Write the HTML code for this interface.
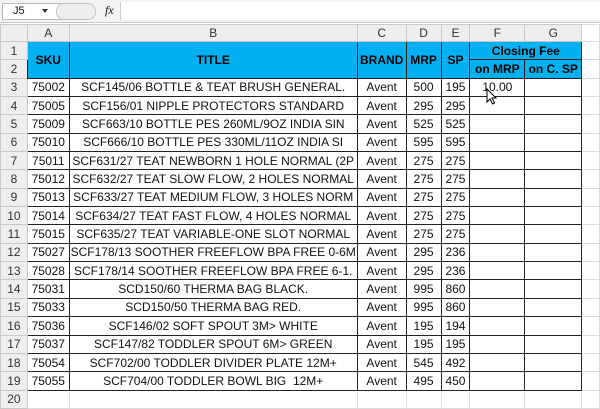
<!DOCTYPE html>
<html><head><style>
body{margin:0;width:600px;height:407px;overflow:hidden;background:#fff;font-family:"Liberation Sans",sans-serif;font-size:12px;color:#111;position:relative}
.fb{position:absolute;left:0;top:0;width:600px;height:22px;background:#f3f3f3;border-bottom:1px solid #c9c9c9}
.nb{position:absolute;left:2px;top:3px;width:50px;height:15px;background:#fff;border:1px solid #bbb;font-size:11px;padding-left:10px;line-height:15px}
.arr{position:absolute;left:42px;top:9px;border:3px solid transparent;border-top:4px solid #333}
.pill{position:absolute;left:56px;top:3px;width:38px;height:15px;border:1px solid #c4c4c4;border-radius:8px;background:#eee}
.fx{position:absolute;left:105px;top:3px;font-style:italic;font-family:"Liberation Serif",serif;font-size:12px}
.fi{position:absolute;left:120px;top:2px;width:480px;height:18px;background:#fff;border-left:1px solid #ccc}
table{position:absolute;left:0;top:24px;border-collapse:collapse;table-layout:fixed}
td{padding:0;height:17.35px;text-align:center;white-space:nowrap;overflow:hidden;border:1px solid #222;font-size:12px}
td.rh{background:#eeeeee;border:1px solid #c8c8c8;color:#333;text-align:center}
tr.ch td{background:#eeeeee;border:1px solid #c8c8c8;color:#333;height:16px}
.bl{background:#00b0f0;font-weight:bold;color:#000}
td.e{border:1px solid #dcdcdc}
</style></head><body>
<div class="fb"><div class="nb">J5</div><div class="arr"></div><div class="pill"></div><div class="fx">fx</div><div class="fi"></div></div>
<table>
<colgroup><col style="width:27px"><col style="width:42px"><col style="width:288px"><col style="width:49px"><col style="width:35px"><col style="width:29px"><col style="width:55px"><col style="width:57px"><col style="width:18px"></colgroup>
<tr class="ch"><td></td><td>A</td><td>B</td><td>C</td><td>D</td><td>E</td><td>F</td><td>G</td><td style="background:#fff;border-color:#ddd"></td></tr>
<tr><td class="rh">1</td><td class="bl" rowspan="2">SKU</td><td class="bl" rowspan="2">TITLE</td><td class="bl" rowspan="2">BRAND</td><td class="bl" rowspan="2">MRP</td><td class="bl" rowspan="2">SP</td><td class="bl" colspan="2">Closing Fee</td><td class="e"></td></tr>
<tr><td class="rh">2</td><td class="bl">on MRP</td><td class="bl">on C. SP</td><td class="e"></td></tr>
<tr><td class="rh">3</td><td>75002</td><td>SCF145/06 BOTTLE &amp; TEAT BRUSH GENERAL.</td><td>Avent</td><td>500</td><td>195</td><td>10.00</td><td></td><td class="e"></td></tr>
<tr><td class="rh">4</td><td>75005</td><td>SCF156/01 NIPPLE PROTECTORS STANDARD</td><td>Avent</td><td>295</td><td>295</td><td></td><td></td><td class="e"></td></tr>
<tr><td class="rh">5</td><td>75009</td><td>SCF663/10 BOTTLE PES 260ML/9OZ INDIA SIN</td><td>Avent</td><td>525</td><td>525</td><td></td><td></td><td class="e"></td></tr>
<tr><td class="rh">6</td><td>75010</td><td>SCF666/10 BOTTLE PES 330ML/11OZ INDIA SI</td><td>Avent</td><td>595</td><td>595</td><td></td><td></td><td class="e"></td></tr>
<tr><td class="rh">7</td><td>75011</td><td>SCF631/27 TEAT NEWBORN 1 HOLE NORMAL (2P</td><td>Avent</td><td>275</td><td>275</td><td></td><td></td><td class="e"></td></tr>
<tr><td class="rh">8</td><td>75012</td><td>SCF632/27 TEAT SLOW FLOW, 2 HOLES NORMAL</td><td>Avent</td><td>275</td><td>275</td><td></td><td></td><td class="e"></td></tr>
<tr><td class="rh">9</td><td>75013</td><td>SCF633/27 TEAT MEDIUM FLOW, 3 HOLES NORM</td><td>Avent</td><td>275</td><td>275</td><td></td><td></td><td class="e"></td></tr>
<tr><td class="rh">10</td><td>75014</td><td>SCF634/27 TEAT FAST FLOW, 4 HOLES NORMAL</td><td>Avent</td><td>275</td><td>275</td><td></td><td></td><td class="e"></td></tr>
<tr><td class="rh">11</td><td>75015</td><td>SCF635/27 TEAT VARIABLE-ONE SLOT NORMAL</td><td>Avent</td><td>275</td><td>275</td><td></td><td></td><td class="e"></td></tr>
<tr><td class="rh">12</td><td>75027</td><td>SCF178/13 SOOTHER FREEFLOW BPA FREE 0-6M</td><td>Avent</td><td>295</td><td>236</td><td></td><td></td><td class="e"></td></tr>
<tr><td class="rh">13</td><td>75028</td><td>SCF178/14 SOOTHER FREEFLOW BPA FREE 6-1.</td><td>Avent</td><td>295</td><td>236</td><td></td><td></td><td class="e"></td></tr>
<tr><td class="rh">14</td><td>75031</td><td>SCD150/60 THERMA BAG BLACK.</td><td>Avent</td><td>995</td><td>860</td><td></td><td></td><td class="e"></td></tr>
<tr><td class="rh">15</td><td>75033</td><td>SCD150/50 THERMA BAG RED.</td><td>Avent</td><td>995</td><td>860</td><td></td><td></td><td class="e"></td></tr>
<tr><td class="rh">16</td><td>75036</td><td>SCF146/02 SOFT SPOUT 3M&gt; WHITE</td><td>Avent</td><td>195</td><td>194</td><td></td><td></td><td class="e"></td></tr>
<tr><td class="rh">17</td><td>75037</td><td>SCF147/82 TODDLER SPOUT 6M&gt; GREEN</td><td>Avent</td><td>195</td><td>195</td><td></td><td></td><td class="e"></td></tr>
<tr><td class="rh">18</td><td>75054</td><td>SCF702/00 TODDLER DIVIDER PLATE 12M+</td><td>Avent</td><td>545</td><td>492</td><td></td><td></td><td class="e"></td></tr>
<tr><td class="rh">19</td><td>75055</td><td>SCF704/00 TODDLER BOWL BIG&nbsp; 12M+</td><td>Avent</td><td>495</td><td>450</td><td></td><td></td><td class="e"></td></tr>
<tr><td class="rh">20</td><td class="e"></td><td class="e"></td><td class="e"></td><td class="e"></td><td class="e"></td><td class="e"></td><td class="e"></td><td class="e"></td></tr>
</table>
<svg style="position:absolute;left:486px;top:88px" width="12" height="18" viewBox="0 0 12 18"><path d="M1 1 L1 14 L4 11 L6.5 16 L8.5 15 L6 10 L10 10 Z" fill="#fff" stroke="#000" stroke-width="1"/></svg>
</body></html>
